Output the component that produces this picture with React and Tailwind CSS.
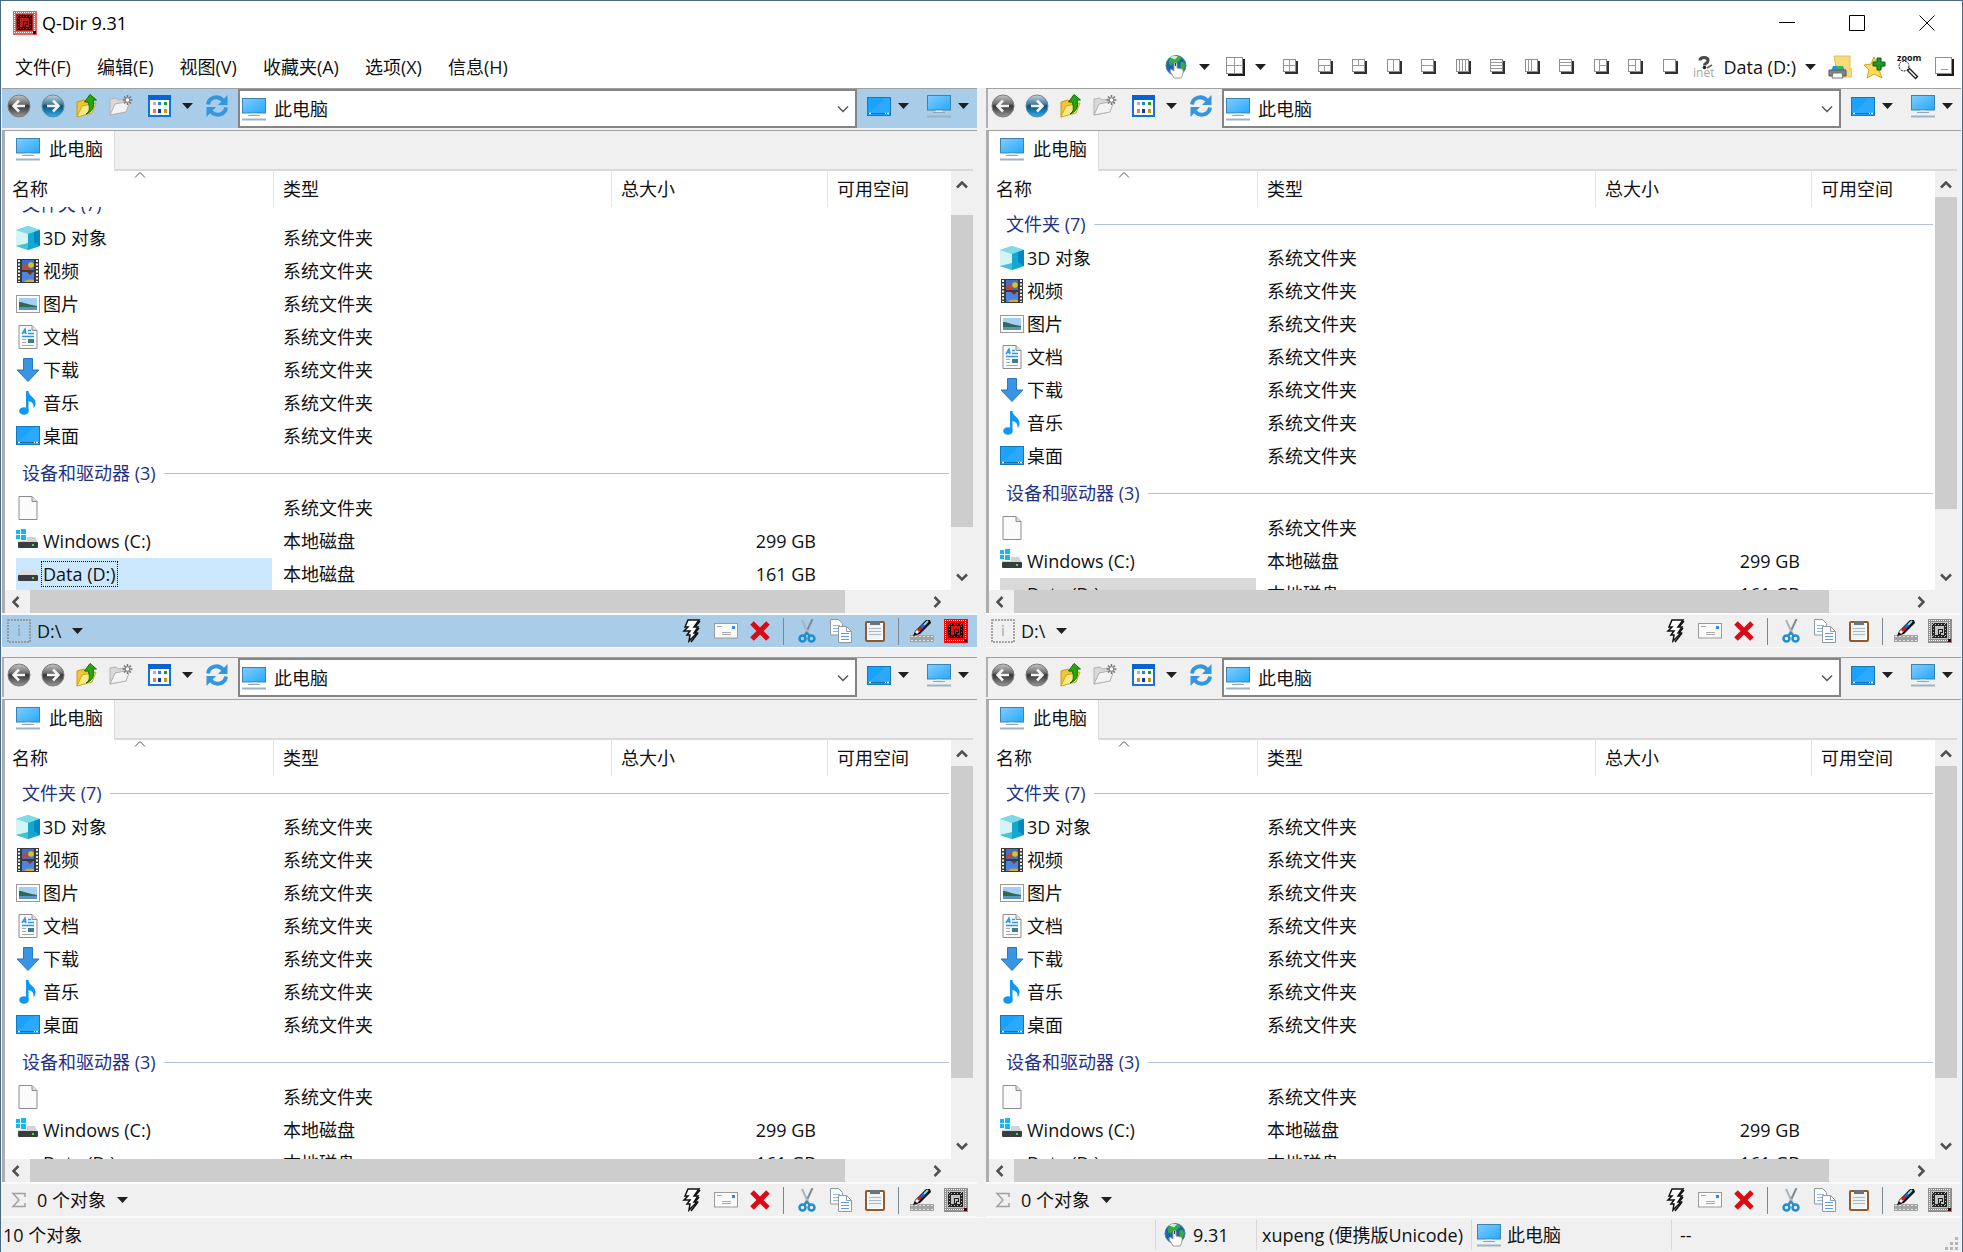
import { useEffect, useRef } from 'react'

const Caret = () => (
  <svg className="w-[11px] h-[6px] shrink-0" viewBox="0 0 11 6"><path d="M0 0h11L5.5 6z" fill="#1f1f1f" /></svg>
)

const Chevron = ({ className }) => (
  <svg className={className} width="12" height="8" viewBox="0 0 12 8" fill="none" stroke="currentColor"><path d="M1 1.5l5 5 5-5" /></svg>
)

const Monitor = () => (
  <svg className="shrink-0" width="24" height="24" viewBox="0 0 24 24">
    <defs>
      <linearGradient id="screen" x1="0" y1="0" x2="1" y2="1"><stop offset="0" stopColor="#7fcdff" /><stop offset="1" stopColor="#27a9fb" /></linearGradient>
    </defs>
    <rect x=".5" y="1.5" width="23" height="14.5" fill="url(#screen)" stroke="#3d83b0" />
    <path d="M9 16.5h6l1 2H8z" fill="#dbe6ee" />
    <path d="M6 18.5h12" stroke="#8fa6b8" />
    <path d="M0 22.5h24" stroke="#9db2c4" strokeWidth="2" />
  </svg>
)

const Desktop = () => (
  <svg className="shrink-0" width="24" height="19" viewBox="0 0 24 19">
    <rect x=".5" y=".5" width="23" height="18" fill="#1aa2ff" stroke="#1379b8" />
    <path d="M1 17L18 1h5v16z" fill="#37adff" opacity=".6" />
    <path d="M1 16.5h22" stroke="#0e6fb5" />
    <path d="M2 16.5h2M18 16.5h1M20 16.5h2" stroke="#fff" strokeWidth="1.5" />
  </svg>
)

const Nav = ({ next, blue }) => (
  <svg width="24" height="24" viewBox="0 0 24 24">
    <defs>
      <linearGradient id="orbGray" x1="0" y1="0" x2="0" y2="1"><stop offset="0" stopColor="#c5c5c5" /><stop offset=".4" stopColor="#707070" /><stop offset=".5" stopColor="#343434" /><stop offset="1" stopColor="#9a9a9a" /></linearGradient>
      <linearGradient id="orbBlue" x1="0" y1="0" x2="0" y2="1"><stop offset="0" stopColor="#c6d2da" /><stop offset=".4" stopColor="#4c7f9e" /><stop offset=".5" stopColor="#0c4f7c" /><stop offset="1" stopColor="#27b3f4" /></linearGradient>
    </defs>
    <circle cx="12" cy="12" r="11" fill={blue ? 'url(#orbBlue)' : 'url(#orbGray)'} stroke={blue ? '#5f8ea8' : '#7d7d7d'} />
    <path d={next ? 'M6 12h11M12 6.5l5.5 5.5-5.5 5.5' : 'M18 12H7M12 6.5L6.5 12l5.5 5.5'} fill="none" stroke="#f4f4f4" strokeWidth="2.5" />
  </svg>
)

const FolderUp = () => (
  <svg width="24" height="24" viewBox="0 0 24 24">
    <path d="M2 23V8l7-2 2 2 6-1v10z" fill="#efc636" stroke="#c79a17" />
    <path d="M2 23l5-11 14-3-4 10z" fill="#ffe985" stroke="#d2a520" />
    <path d="M11 20c4-2 4-7 2-12H9.500L15 .5 21.500 6H18c2 7-1 12-7 14z" fill="#28a612" stroke="#127205" />
  </svg>
)

const FolderNew = () => (
  <svg width="24" height="24" viewBox="0 0 24 24">
    <path d="M1 21V5l6-1 2 2 7-1v13z" fill="#d9d9d9" stroke="#b3b3b3" />
    <path d="M1 21L6 10l15-3-4 11z" fill="#f3f3f3" stroke="#b0b0b0" />
    <path d="M18.5 1v10M13.5 6h10M15 2.5l7 7M22 2.5l-7 7" stroke="#777" strokeWidth="1.5" />
    <circle cx="18.5" cy="6" r="2.2" fill="#fff" stroke="#888" />
  </svg>
)

const Views = () => (
  <svg width="23" height="22" viewBox="0 0 23 22" shapeRendering="crispEdges">
    <rect x="1" y="1" width="21" height="20" fill="#fff" stroke="#1570e0" strokeWidth="2" />
    <path d="M0 0h23v5H0z" fill="#0b63d3" />
    <path d="M5 7h3v3H5z" fill="#b6a9d6" /><path d="M10 7h3v3h-3z" fill="#1b86e8" /><path d="M16 7h3v3h-3z" fill="#169b2a" />
    <path d="M5 14h3v4H5z" fill="#f0774a" /><path d="M10 14h3v4h-3z" fill="#0d3a9e" /><path d="M16 14h3v4h-3z" fill="#c99a07" />
  </svg>
)

const Refresh = () => (
  <svg width="24" height="24" viewBox="0 0 24 24" fill="none" stroke="#3596e0" strokeWidth="4">
    <path d="M3 10.5C4 3 13 1 18 6.500" /><path d="M21 13.500c-1 7.500-10 9.500-15 4" />
    <path d="M22.500 1v10H13z" fill="#3596e0" stroke="none" /><path d="M1.500 23V13H11z" fill="#3596e0" stroke="none" />
  </svg>
)

const QMark = ({ fill, ring, core }) => (
  <svg width="24" height="24" viewBox="0 0 24 24" shapeRendering="crispEdges" fill="none">
    <path d="M0 0h24v24H0z" fill={fill} />
    <path d="M1 1.500h22M1 21.500h22M1.500 1v22M21.500 1v22" stroke="#fff" strokeDasharray="1 1" />
    <path d="M3 3h17v17H3z" fill={core} />
    <rect x="5.500" y="5.500" width="12" height="12" stroke={ring} strokeWidth="3" />
    <path d="M4 5.500h16M4 17.500h16M5.500 4v16M17.500 4v16" stroke={core} strokeDasharray="1 2" />
    <path d="M10 10.500h4v3h-2v2h-2z" stroke={ring} />
    <path d="M20 20h3v3h-3z" fill="#300" />
  </svg>
)

const Globe = () => (
  <svg width="22" height="24" viewBox="0 0 22 24">
    <circle cx="11" cy="10.5" r="10" fill="#1b62b4" stroke="#4a7fa5" />
    <path d="M4 5c3-4 9-4.500 12-3 1 3-2 3-3 5-2 2-5 0-6 3-2 1-4-1-3-5zM16 7c2-1 4 1 4 3 0 4-2 6-3 6-2-3-2-7-1-9z" fill="#35ad3c" />
    <path d="M5 2.500c2-2 6-2 8-1l-3 3z" fill="#c9efd2" />
    <path d="M9 9c0-2 3-2 3 0v4l5 1c2 1 1 6-1 9H9c-1-3-4-5-4-8 1-1 3 0 4 1z" fill="#fff" stroke="#9a9a9a" />
    <path d="M10.500 8v3" stroke="#333" />
  </svg>
)

const Layout = ({ d, big }) => (
  <svg width={big ? 20 : 15} height={big ? 20 : 15} viewBox={big ? '0 0 20 20' : '0 0 15 15'} shapeRendering="crispEdges" fill="none">
    {big ? <path d="M2 2h17v17H2z" fill="#1c1c1c" /> : <path d="M2 2h13v13H2z" fill="#303030" />}
    {big ? <rect x=".5" y=".5" width="16" height="16" fill="#fff" stroke="#8f8f8f" /> : <rect x=".5" y=".5" width="12" height="12" fill="#fff" stroke="#8f8f8f" />}
    <path d={d} stroke="#999" />
  </svg>
)

const layouts = [
  ['四窗格', 'M6.5 0v13M0 6.5h13'],
  ['上一下二', 'M0 6.5h13M6.5 7v6'],
  ['上二下一', 'M0 6.5h13M6.5 0v6'],
  ['左右', 'M6.5 0v13'],
  ['上下', 'M0 6.5h13'],
  ['四列', 'M3.5 0v13M6.5 0v13M9.5 0v13'],
  ['四行', 'M0 3.5h13M0 6.5h13M0 9.5h13'],
  ['三列', 'M3.5 0v13M6.5 0v13'],
  ['三行', 'M0 3.5h13M0 6.5h13'],
  ['左一右二', 'M5.5 0v13M6 6.5h7'],
  ['左二右一', 'M7.5 0v13M0 6.5h7'],
  ['单窗格', ''],
]

const Inet = () => (
  <svg className="overflow-visible" width="22" height="22" viewBox="0 0 22 22">
    <path d="M7 4.500c0-4 8-4 8 0 0 3-3.500 2.500-3.500 5" fill="none" stroke="#4a4a4a" strokeWidth="3" />
    <circle cx="11.500" cy="11.500" r="1.800" fill="#222" />
    <path d="M14 12l5-3" stroke="#666" strokeWidth="1.500" />
    <text x="0" y="21" fontSize="12" fill="#a6a6a6" fontFamily="Open Sans, sans-serif">inet</text>
  </svg>
)

const Printer = () => (
  <svg width="24" height="24" viewBox="0 0 24 24">
    <path d="M6 1h16v13h2v8H10z" fill="#f7db7a" stroke="#e3c14d" />
    <path d="M5 11h10l2 5H3z" fill="#2a8fe6" /><path d="M9 11h6l-4 5H8z" fill="#2fbf3a" />
    <path d="M1 15h17v6H1z" fill="#7d848a" stroke="#565b60" />
    <path d="M5 18h9l1 5H4z" fill="#fff" stroke="#777" />
  </svg>
)

const Star = () => (
  <svg width="24" height="24" viewBox="0 0 24 24">
    <path d="M11 2l3 7 8 1-6 5 3 8-8-4-7 4 2-8-5-5 7-1z" fill="#ffdc57" stroke="#d7a21c" />
    <path d="M14 3h4v4h4v4h-4v4h-4v-4h-4V7h4z" fill="#1d9a24" stroke="#0a5f11" />
  </svg>
)

const Zoom = () => (
  <svg className="overflow-visible" width="26" height="26" viewBox="0 0 26 26">
    <text x="0" y="7" fontSize="9" fontWeight="700" fill="#111" fontFamily="Open Sans, sans-serif">zoom</text>
    <circle cx="7" cy="12" r="5" fill="#fff" stroke="#111" strokeDasharray="2 1" />
    <path d="M11 15l9 9" stroke="#222" strokeWidth="4" /><path d="M12 16l7 7" stroke="#fff" strokeWidth="1.5" />
  </svg>
)

const Lightning = () => (
  <svg width="22" height="24" viewBox="0 0 22 24">
    <path d="M7 1h11l-5 7h4l-4 6h3L8 22l1-6H6l3-4H3l4-4H4z" fill="#fff" stroke="#111" strokeWidth="1.5" />
    <path d="M19 2l-5 6M18 9l-4 5M17 14l-7 9" stroke="#111" strokeWidth="1.5" />
  </svg>
)

const Mail = () => (
  <svg width="24" height="16" viewBox="0 0 24 16">
    <rect x=".5" y=".5" width="23" height="14.5" fill="#fafafa" stroke="#9b9b9b" />
    <path d="M3 3.5h5M8 9.5h9M8 11.5h9" stroke="#aaa" /><path d="M18 3h3v3h-3z" fill="#2e8be8" />
  </svg>
)

const Cross = () => (
  <svg width="22" height="20" viewBox="0 0 22 20"><path d="M3 2l16 16M19 2L3 18" stroke="#dc0a14" strokeWidth="5" /></svg>
)

const Scissors = () => (
  <svg width="18" height="24" viewBox="0 0 18 24" fill="none">
    <path d="M14.500 0L7 16" stroke="#7c8a96" strokeWidth="2" /><path d="M4 1l7 15" stroke="#aab5bf" strokeWidth="2" />
    <circle cx="4.500" cy="19.500" r="3" stroke="#1f8fd0" strokeWidth="2.500" /><circle cx="13.500" cy="19.500" r="3" stroke="#1f8fd0" strokeWidth="2.500" />
    <path d="M6 17l3-3 3 3" stroke="#1f8fd0" strokeWidth="2" />
  </svg>
)

const Copy = () => (
  <svg width="22" height="24" viewBox="0 0 22 24">
    <path d="M.5.5h8l4 4V16H.5z" fill="#fdfdfd" stroke="#8d9aa6" /><path d="M3 6.5h7M3 9.5h7M3 12.5h7" stroke="#8fb5ea" />
    <path d="M8.5 7.5h8l5 5v11h-13z" fill="#fff" stroke="#8d9aa6" /><path d="M16.5 7.5v5h5" fill="none" stroke="#8d9aa6" /><path d="M11 14.5h8M11 17.5h8M11 20.5h8" stroke="#5e9aea" />
  </svg>
)

const Clipboard = () => (
  <svg width="20" height="22" viewBox="0 0 20 22">
    <rect x="1" y="2" width="18" height="19" rx="1" fill="#fff" stroke="#92592a" strokeWidth="2" />
    <path d="M3 4h14v12l-3 3H3z" fill="#eef3f7" /><path d="M4 8.5h12M4 11.5h12M4 14.5h12" stroke="#aab8c4" />
    <path d="M5 1h10v4H5z" fill="#6c747b" />
  </svg>
)

const Pen = () => (
  <svg width="24" height="24" viewBox="0 0 24 24">
    <path d="M0 16h24v7H0z" fill="#a3a3a3" /><path d="M1 17.5h22M1 21.5h22" stroke="#e2e2e2" strokeDasharray="2 2" />
    <path d="M5 12L16 1h4l1 3-11 11-7 2z" fill="#111" />
    <path d="M6 14l3-3" stroke="#fff" strokeWidth="3" /><path d="M8 12l3-3" stroke="#e31919" strokeWidth="3" /><path d="M11 9l3-3" stroke="#2566e0" strokeWidth="3" /><path d="M14 6l4-4" stroke="#7fe0f0" strokeWidth="2" />
  </svg>
)

const Cube = () => (
  <svg width="24" height="24" viewBox="0 0 24 24">
    <path d="M12 0l12 4v16l-12 4L0 20V4z" fill="#49c9dc" />
    <path d="M12 0l12 4-12 4L0 4z" fill="#7edbe6" /><path d="M0 4l12 4v10L0 20z" fill="#d5f5f5" />
    <path d="M12 8l12-4v16l-12 4z" fill="#12a8cf" /><path d="M18 6l6-2v16l-6-4z" fill="#0587c0" /><path d="M0 20l12-3v7z" fill="#43c4d6" />
  </svg>
)

const Film = () => (
  <svg width="22" height="24" viewBox="0 0 22 24">
    <path d="M0 0h22v24H0z" fill="#3a3a3a" /><path d="M2 1v22M20 1v22" stroke="#f2f2f2" strokeWidth="2" strokeDasharray="2 1.5" />
    <path d="M5 1h12v10H5z" fill="#3d6fd0" /><path d="M5 13h12v10H5z" fill="#4a86e0" />
    <path d="M5 8l5-4 2 6H5z" fill="#c8452f" /><circle cx="14" cy="6" r="2.800" fill="#d9c51f" /><path d="M10 13h6l-3 3z" fill="#8a2a1d" /><path d="M7 23c1-3 7-3 10-2v2z" fill="#dfa82c" />
  </svg>
)

const Photo = () => (
  <svg width="24" height="18" viewBox="0 0 24 18">
    <rect x=".5" y=".5" width="23" height="17" fill="#fff" stroke="#9a9a9a" />
    <path d="M3 3h18v12H3z" fill="#a5d0f5" /><path d="M3 7c4 0 6 2 18 4v1H3z" fill="#2f6b4f" /><path d="M3 12h18v3H3z" fill="#5b93c4" />
  </svg>
)

const Page = ({ filled }) => (
  <svg width="20" height="24" viewBox="0 0 20 24">
    <path d="M1 .5h13l5 5v18H1z" fill="#fbfbfb" stroke="#8c8c8c" /><path d="M14 .5v5h5" fill="#ddd" stroke="#8c8c8c" />
    {filled && <g stroke="#2f97e0" fill="none">
      <path d="M4 9l3-5 1 5M5 7.5h3M10 5.5h3M10 8.5h6M4 11.5h12" strokeWidth="1.5" />
      <path d="M4 14.5h4M4 17.5h4M4 20.5h12" stroke="#a9a9a9" /><path d="M10 14h6v4h-6z" fill="#3a7f8f" stroke="none" />
    </g>}
  </svg>
)

const Down = () => (
  <svg width="24" height="24" viewBox="0 0 24 24"><path d="M7.5.5h9V12H23L12 23.500 1 12h6.500z" fill="#3a94e4" stroke="#2878c4" /></svg>
)

const Note = () => (
  <svg width="24" height="24" viewBox="0 0 24 24">
    <path d="M10 0h2.500c0 5 7 6 7 12 0 3-1 4-2 5 .5-5-2-6-5-7v9H10z" fill="#0e98f5" /><ellipse cx="8" cy="20" rx="4.800" ry="3.800" fill="#0e98f5" />
  </svg>
)

const Drive = ({ win }) => (
  <svg width="24" height="24" viewBox="0 0 24 24">
    {win && <path d="M0 1h4v4H0zM5 0h5v5H5zM0 6h4v4H0zM5 6h5v5H5z" fill="#12b9f3" />}
    <path d="M11 8h8l3 6H2v-2h9z" fill="#d2d3d6" />
    {!win && <path d="M5 8h14l3 6H2z" fill="#dcdde0" />}
    <rect x="2" y="13" width="20" height="6" rx="1" fill="#3a3d40" /><path d="M16 16h2" stroke="#3be04c" strokeWidth="2" />
  </svg>
)

const folders = [
  ['3D 对象', <Cube />], ['视频', <Film />], ['图片', <Photo />], ['文档', <Page filled />],
  ['下载', <Down />], ['音乐', <Note />], ['桌面', <Desktop />],
]

const drives = [
  { name: '', type: '系统文件夹', size: '', icon: <Page /> },
  { name: 'Windows (C:)', type: '本地磁盘', size: '299 GB', icon: <Drive win /> },
  { name: 'Data (D:)', type: '本地磁盘', size: '161 GB', icon: <Drive /> },
]

function Group({ label, className }) {
  return (
    <tr>
      <th colSpan={4} scope="colgroup" className={`${className} p-0 text-left align-top font-normal text-[#1e3287]`}>
        <div className="flex h-[34px] items-center gap-2 pl-[17px] pr-0.5">
          {label}<span className="h-px flex-1 bg-[#b4c0e0]" />
        </div>
      </th>
    </tr>
  )
}

function Row({ name, type, size, icon, select }) {
  return (
    <tr className="h-[33px]">
      <td className="p-0 pl-[11px] pr-0.5">
        <div className={`flex h-8 items-center gap-0.5 ${select === 'focus' ? 'bg-[#cce8ff]' : select ? 'bg-[#d9d9d9]' : ''}`}>
          <span className="flex w-6 justify-center">{icon}</span>
          <span className={`px-px ${select === 'focus' ? 'outline-1 outline-dotted outline-black' : ''}`}>{name}</span>
        </div>
      </td>
      <td className="p-0 pl-[9px]">{type}</td>
      <td className="p-0 pr-3 text-right">{size}</td>
      <td className="p-0" />
    </tr>
  )
}

const Tool = ({ label, children, className = 'w-[34px]' }) => (
  <button type="button" aria-label={label} className={`flex shrink-0 items-center justify-center ${className}`}>{children}</button>
)

function Pane({ active, forward, scrolled, select, info }) {
  const list = useRef(null)

  useEffect(() => {
    if (scrolled) list.current.scrollTop = 21
  }, [scrolled])

  return (
    <section className="flex min-h-0 min-w-0 flex-col border-t border-[#a0a0a0] bg-[#f0f0f0]">
      <div className={`flex h-[39px] shrink-0 ${active ? 'bg-[#a9cce8]' : 'shadow-[inset_2px_0_#b0b0b0]'}`}>
        <div className="flex items-center pb-[5px] pr-[7px]">
          <Tool label="后退"><Nav /></Tool>
          <Tool label="前进"><Nav next blue={forward} /></Tool>
          <Tool label="向上"><FolderUp /></Tool>
          <Tool label="新建文件夹"><FolderNew /></Tool>
          <Tool label="查看" className="w-[64px] gap-[11px]"><Views /><Caret /></Tool>
          <Tool label="刷新" className="w-[29px]"><Refresh /></Tool>
        </div>
        <div className="flex min-w-0 flex-1 items-center gap-1 border-2 border-[#858585] bg-white px-0.5">
          <Monitor />
          <input aria-label="地址" defaultValue="此电脑" className="min-w-0 flex-1 px-1 outline-none" />
          <button type="button" aria-label="展开地址" className="pr-1 text-[#555]"><Chevron className="stroke-[1.5]" /></button>
        </div>
        <div className="flex items-center pb-[5px]">
          <Tool label="桌面" className="w-[62px] gap-[7px]"><Desktop /><Caret /></Tool>
          <Tool label="此电脑" className="w-[58px] gap-[7px]"><Monitor /><Caret /></Tool>
        </div>
      </div>

      <div className="mt-0.5 flex min-h-0 flex-1 flex-col border-t border-l-[3px] border-t-[#a0a0a0] border-l-[#adadad] pr-1">
        <div className="flex h-10 shrink-0">
          <button type="button" className="flex items-center gap-[9px] border-r border-[#dcdcdc] bg-white pb-1 pl-[11px] pr-[11px]"><Monitor />此电脑</button>
          <div className="flex-1 border-b-2 border-[#d9d9d9]" />
        </div>
        <div className="flex min-h-0 flex-1">
          <div ref={list} className="min-w-0 flex-1 overflow-hidden bg-white">
            <table className="w-full table-fixed border-separate border-spacing-0">
              <thead className="sticky top-0 z-10 bg-white">
                <tr className="h-9 text-left">
                  <th className="relative w-[269px] border-r border-[#e5e5e5] p-0 pl-[7px] font-normal">
                    名称<Chevron className="absolute left-[129px] top-0 rotate-180 text-[#555]" />
                  </th>
                  <th className="w-[338px] border-r border-[#e5e5e5] p-0 pl-[9px] font-normal">类型</th>
                  <th className="w-[216px] border-r border-[#e5e5e5] p-0 pl-[9px] font-normal">总大小</th>
                  <th className="p-0 pl-[9px] font-normal">可用空间</th>
                </tr>
              </thead>
              <tbody>
                <Group label="文件夹 (7)" className="h-[34px]" />
                {folders.map(([name, icon]) => <Row key={name} name={name} icon={icon} type="系统文件夹" />)}
                <Group label="设备和驱动器 (3)" className="h-[39px] pt-1" />
                {drives.map((d, i) => <Row key={i} {...d} select={i === 2 && select} />)}
              </tbody>
            </table>
          </div>
          <div className="flex w-[22px] shrink-0 flex-col text-[#505050]">
            <button type="button" aria-label="向上滚动" className="flex h-[26px] items-center justify-center pt-0.5"><Chevron className="rotate-180 stroke-[2.5]" /></button>
            <div className="flex-1"><div className={`h-[85%] bg-[#cdcdcd] ${scrolled ? 'translate-y-[18px]' : ''}`} /></div>
            <button type="button" aria-label="向下滚动" className="flex h-[26px] items-center justify-center"><Chevron className="stroke-[2.5]" /></button>
          </div>
        </div>
        <div className="flex h-[23px] shrink-0 pr-[22px] text-[#505050]">
          <button type="button" aria-label="向左滚动" className="flex w-[25px] items-center justify-center pr-[3px]"><Chevron className="rotate-90 stroke-[2.5]" /></button>
          <div className="flex-1"><div className="h-full w-[91%] bg-[#cdcdcd]" /></div>
          <button type="button" aria-label="向右滚动" className="flex w-[25px] items-center justify-center pr-[3px]"><Chevron className="-rotate-90 stroke-[2.5]" /></button>
        </div>
      </div>

      <div className={`flex h-[35px] shrink-0 items-center border-t-2 border-b border-[#fafafa] pl-[5px] pr-1 ${active ? 'bg-[#a9cce8]' : ''}`}>
        {info ? (
          <svg width="24" height="24" viewBox="0 0 24 24" fill="none" stroke="#8c8c8c">
            <rect x="1" y="1" width="22" height="22" strokeWidth="1.5" strokeDasharray="2 1" /><path d="M12 6v2M12 9v8" />
          </svg>
        ) : (
          <svg width="24" height="24" viewBox="0 0 24 24" fill="none" stroke="#a0a0a0" strokeWidth="1.5"><path d="M18 9V5.5H6l6 6.5-6 6.5h12V15" /></svg>
        )}
        <button type="button" className="ml-1.5 flex items-center gap-[11px]">{info ? 'D:\\' : '0 个对象'}<Caret /></button>
        <div className="ml-auto flex items-center">
          <Tool label="快速操作"><Lightning /></Tool>
          <Tool label="邮件"><Mail /></Tool>
          <Tool label="删除"><Cross /></Tool>
          <span className="mx-1.5 h-[27px] w-px bg-[#7b8894]" />
          <Tool label="剪切"><Scissors /></Tool>
          <Tool label="复制"><Copy /></Tool>
          <Tool label="粘贴"><Clipboard /></Tool>
          <span className="mx-1.5 h-[27px] w-px bg-[#7b8894]" />
          <Tool label="颜色"><Pen /></Tool>
          <Tool label="Q-Dir">
            {active ? <QMark fill="#f00a0a" ring="#1a0000" core="#f00a0a" /> : <QMark fill="#8f8f8f" ring="#222" core="#c4c4c4" />}
          </Tool>
        </div>
      </div>
    </section>
  )
}

export default function App() {
  return (
    <div className="flex h-screen flex-col overflow-hidden border-x border-t border-[#4a6a85] bg-[#f0f0f0] font-['Open_Sans','Noto_Sans_CJK_SC',sans-serif] text-[18px] leading-6 text-[#111]">
      <header className="flex h-11 shrink-0 items-center bg-white pl-3">
        <QMark fill="#f55a5a" ring="#3a0000" core="#b32020" />
        <h1 className="ml-[5px] text-black">Q-Dir 9.31</h1>
        <div className="ml-auto flex self-stretch">
          <Tool label="最小化" className="w-[70px]"><svg width="16" height="16" viewBox="0 0 16 16"><path d="M0 7.5h16" stroke="#000" /></svg></Tool>
          <Tool label="最大化" className="w-[70px]"><svg width="16" height="16" viewBox="0 0 16 16"><path d="M.5.5h15v15H.5z" fill="none" stroke="#000" /></svg></Tool>
          <Tool label="关闭" className="w-[70px]"><svg width="16" height="16" viewBox="0 0 16 16"><path d="M.5.5l15 15M15.5.5l-15 15" stroke="#000" /></svg></Tool>
        </div>
      </header>

      <div className="flex h-[43px] shrink-0 items-center bg-white">
        <nav className="flex pl-px">
          {['文件(F)', '编辑(E)', '视图(V)', '收藏夹(A)', '选项(X)', '信息(H)'].map(m => (
            <button key={m} type="button" className="px-[13px]">{m}</button>
          ))}
        </nav>
        <div className="ml-auto flex items-center">
          <Tool label="语言" className="w-16 gap-3"><Globe /><Caret /></Tool>
          <Tool label="布局" className="w-[54px] gap-[9px]"><Layout big d="M8.5 0v17M0 8.5h17" /><Caret /></Tool>
          <div className="grid w-[414px] grid-cols-12">
            {layouts.map(([label, d]) => <Tool key={label} label={label} className="w-full"><Layout d={d} /></Tool>)}
          </div>
          <Tool label="网络"><Inet /></Tool>
          <button type="button" className="flex items-center gap-[9px] pl-0.5 pr-1.5">Data (D:)<Caret /></button>
          <Tool label="打印" className="w-[35px]"><Printer /></Tool>
          <Tool label="收藏" className="w-[35px]"><Star /></Tool>
          <Tool label="放大镜" className="w-[35px]"><Zoom /></Tool>
          <Tool label="托盘" className="w-[35px]"><Layout big d="M6 12.5h7" /></Tool>
        </div>
      </div>

      <main className="grid min-h-0 flex-1 grid-cols-2 grid-rows-2 gap-[9px] px-px">
        <Pane active forward scrolled info select="focus" />
        <Pane forward info select="dim" />
        <Pane />
        <Pane />
      </main>

      <footer className="flex h-[35px] shrink-0 items-center border-t border-[#fafafa]">
        <span className="flex-1 pl-0.5">10 个对象</span>
        <span className="flex h-[30px] w-[101px] items-center gap-[7px] border-l border-[#d7d7d7] pl-2"><Globe />9.31</span>
        <span className="flex h-[30px] w-[215px] items-center overflow-hidden whitespace-nowrap border-l border-[#d7d7d7] pl-[5px]">xupeng (便携版Unicode)</span>
        <span className="flex h-[30px] w-[200px] items-center gap-1.5 border-l border-[#d7d7d7] pl-[5px]"><Monitor />此电脑</span>
        <span className="flex h-[30px] w-[291px] items-center border-l border-[#d7d7d7] pl-2">--
          <svg className="ml-auto mr-1 self-end" width="13" height="13" viewBox="0 0 13 13"><path d="M10 0h3v3h-3zM10 5h3v3h-3zM10 10h3v3h-3zM5 5h3v3H5zM5 10h3v3H5zM0 10h3v3H0z" fill="#b5b5b5" /></svg>
        </span>
      </footer>
    </div>
  )
}
